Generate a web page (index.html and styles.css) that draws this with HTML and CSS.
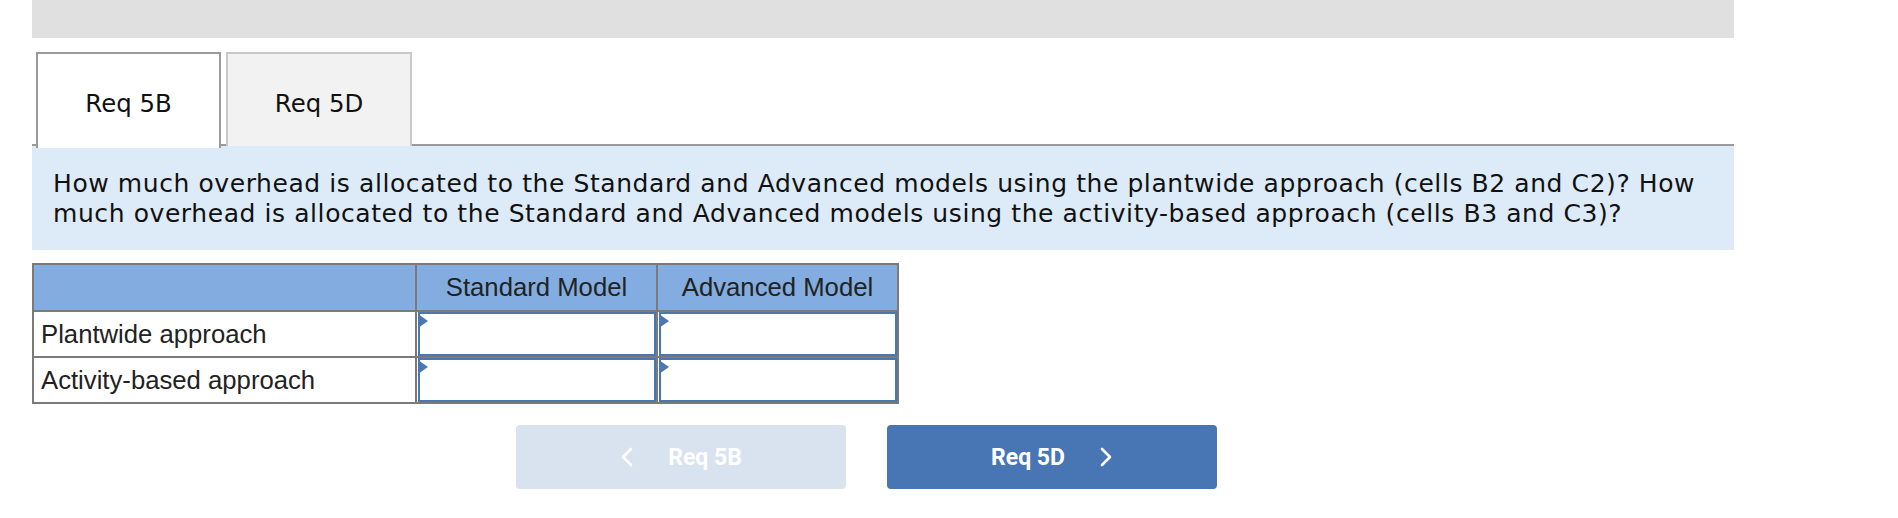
FILE: index.html
```html
<!DOCTYPE html>
<html>
<head>
<meta charset="utf-8">
<link rel="stylesheet" href="styles.css">
</head>
<body>
<div class="page">
  <div class="topbar"></div>
  <div class="tabs">
    <div class="tab active">Req 5B</div>
    <div class="tab">Req 5D</div>
  </div>
  <div class="question">How much overhead is allocated to the Standard and Advanced models using the plantwide approach (cells B2 and C2)? How much overhead is allocated to the Standard and Advanced models using the activity-based approach (cells B3 and C3)?</div>
  <table class="grid">
    <tr class="head">
      <th class="label"></th>
      <th>Standard Model</th>
      <th>Advanced Model</th>
    </tr>
    <tr>
      <td class="label">Plantwide approach</td>
      <td class="cell"><div class="input"><span class="flag"></span></div></td>
      <td class="cell"><div class="input"><span class="flag"></span></div></td>
    </tr>
    <tr>
      <td class="label">Activity-based approach</td>
      <td class="cell"><div class="input"><span class="flag"></span></div></td>
      <td class="cell"><div class="input"><span class="flag"></span></div></td>
    </tr>
  </table>
  <div class="nav">
    <button class="btn prev">
      <svg class="chev" width="14" height="20" viewBox="0 0 14 20"><path d="M11 2 L3 10 L11 18" fill="none" stroke="#fff" stroke-width="2.6" stroke-linecap="round" stroke-linejoin="round"/></svg>
      <span>Req 5B</span>
    </button>
    <button class="btn next">
      <span>Req 5D</span>
      <svg class="chev" width="14" height="20" viewBox="0 0 14 20"><path d="M3 2 L11 10 L3 18" fill="none" stroke="#fff" stroke-width="2.6" stroke-linecap="round" stroke-linejoin="round"/></svg>
    </button>
  </div>
</div>
</body>
</html>
```
FILE: styles.css
```css
html, body {
  margin: 0;
  padding: 0;
  background: #fff;
}
.page {
  margin-left: 32px;
  width: 1702px;
}
.topbar {
  height: 38px;
  background: #e0e0e0;
}
.tabs {
  display: flex;
  gap: 5px;
  margin-top: 14px;
  padding-left: 4px;
  border-bottom: 2px solid #9a9a9a;
  height: 94px;
  box-sizing: border-box;
}
.tab {
  width: 186px;
  height: 94px;
  box-sizing: border-box;
  display: flex;
  align-items: center;
  justify-content: center;
  font-family: "DejaVu Sans", Verdana, sans-serif;
  font-size: 24.4px;
  color: #111;
  background: #f2f2f2;
  border: 2px solid #c8c8c8;
  border-bottom: none;
  padding-top: 6px;
}
.tab.active {
  width: 185px;
  background: #fff;
  border-color: #9a9a9a;
  height: 96px;
  margin-bottom: -2px;
  padding-top: 4px;
}
.question {
  background: #ddebf8;
  font-family: "DejaVu Sans", Verdana, sans-serif;
  font-size: 25px;
  letter-spacing: 0.58px;
  line-height: 29.5px;
  color: #111;
  padding: 23px 24px 22px 21px;
  height: 104px;
  box-sizing: border-box;
}
.grid {
  margin-top: 13px;
  border-collapse: collapse;
  border: 2px solid #7a7a7a;
  font-family: "Liberation Sans", Arial, sans-serif;
  font-size: 25.7px;
  color: #222;
}
.grid th, .grid td {
  border: 2px solid #7a7a7a;
  padding: 0;
  height: 44px;
}
.grid .head th {
  background: #83ade0;
  font-weight: normal;
  text-align: center;
  height: 45px;
}
.grid .label {
  width: 374px;
  text-align: left;
  padding-left: 7px;
}
.grid .cell {
  width: 238px;
  padding: 0 0 0 1px;
  vertical-align: top;
}
.input {
  position: relative;
  height: 40px;
  border: 2px solid #4a76b4;
  background: #fff;
  box-sizing: content-box;
}
.flag {
  position: absolute;
  left: -2px;
  top: 0;
  width: 0;
  height: 0;
  border-top: 7px solid transparent;
  border-bottom: 7px solid transparent;
  border-left: 10px solid #4a76b4;
}
.nav {
  display: flex;
  gap: 41px;
  margin-top: 21px;
  margin-left: 484px;
}
.btn {
  width: 330px;
  height: 64px;
  border: none;
  border-radius: 4px;
  display: flex;
  align-items: center;
  justify-content: center;
  gap: 34px;
  font-family: Roboto, "Liberation Sans", sans-serif;
  font-weight: 700;
  font-size: 23px;
  color: #fff;
  padding: 0;
}
.btn.prev {
  background: #d9e3ef;
}
.btn.next {
  background: #4876b4;
}
.chev {
  display: block;
}
```
